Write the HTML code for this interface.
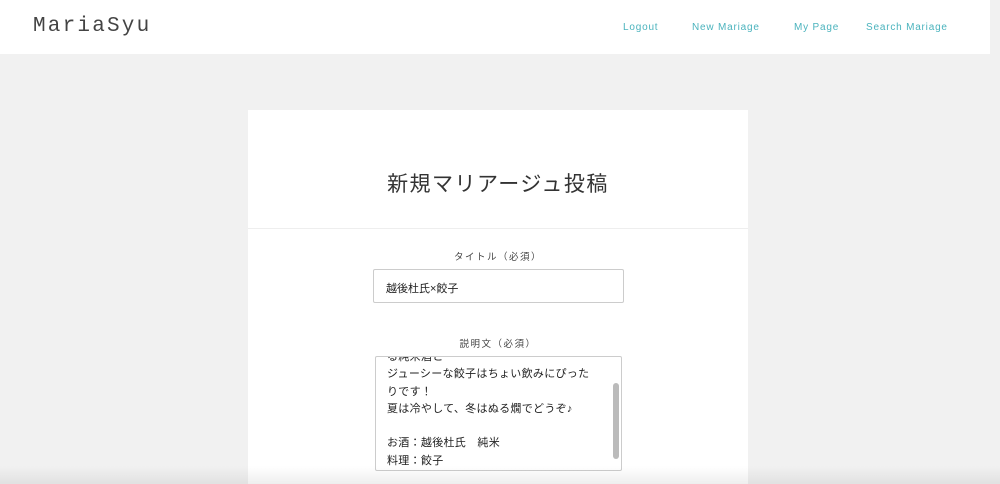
<!DOCTYPE html>
<html><head><meta charset="utf-8"><style>
*{margin:0;padding:0;box-sizing:border-box}
html,body{width:1000px;height:484px;overflow:hidden}
body{background:#f1f1f1;font-family:"Liberation Sans","Noto Sans CJK JP",sans-serif;position:relative}
.hdr{position:absolute;left:0;top:0;width:990px;height:54px;background:#fff}
.logo{position:absolute;left:33px;top:15px;font-family:"Liberation Mono",monospace;font-size:21px;color:#444;letter-spacing:2.2px}
.nav a{position:absolute;top:22px;font-size:10px;color:#4ab3bd;letter-spacing:.8px;text-decoration:none}
.card{position:absolute;left:248px;top:110px;width:500px;height:374px;background:#fff}
.ttl{position:absolute;left:0;top:58px;width:500px;text-align:center;font-size:21px;color:#333;letter-spacing:1.5px}
.hr{position:absolute;left:0;top:118px;width:500px;height:1px;background:#eee}
.lbl{position:absolute;left:0;width:500px;text-align:center;font-size:9.5px;color:#444;letter-spacing:1.5px}
.inp{position:absolute;left:125px;top:159px;width:251px;height:34px;border:1px solid #ccc;border-radius:2px;font-size:11px;color:#222;padding:10px 12px}
.ta{position:absolute;left:127px;top:246px;width:247px;height:115px;border:1px solid #ccc;border-radius:2px;overflow:hidden}
.ta div{position:absolute;left:11px;top:-8px;font-size:11px;line-height:17.3px;color:#222;letter-spacing:.3px;white-space:pre}
.sb{position:absolute;right:2px;top:26px;width:6px;height:76px;background:#bbb;border-radius:3px}
.shade{position:absolute;left:0;top:466px;width:1000px;height:18px;background:linear-gradient(#0000,#0001)}
</style></head><body>
<div class="hdr"><div class="logo">MariaSyu</div>
<div class="nav"><a style="left:623px">Logout</a><a style="left:692px">New Mariage</a><a style="left:794px">My Page</a><a style="left:866px">Search Mariage</a></div></div>
<div class="card">
<div class="ttl">新規マリアージュ投稿</div>
<div class="hr"></div>
<div class="lbl" style="top:139px">タイトル（必須）</div>
<div class="inp">越後杜氏×餃子</div>
<div class="lbl" style="top:226px">説明文（必須）</div>
<div class="ta"><div>る純米酒と
ジューシーな餃子はちょい飲みにぴった
りです！
夏は冷やして、冬はぬる燗でどうぞ♪

お酒：越後杜氏　純米
料理：餃子</div><span class="sb"></span></div>
</div>
<div class="shade"></div>
</body></html>
